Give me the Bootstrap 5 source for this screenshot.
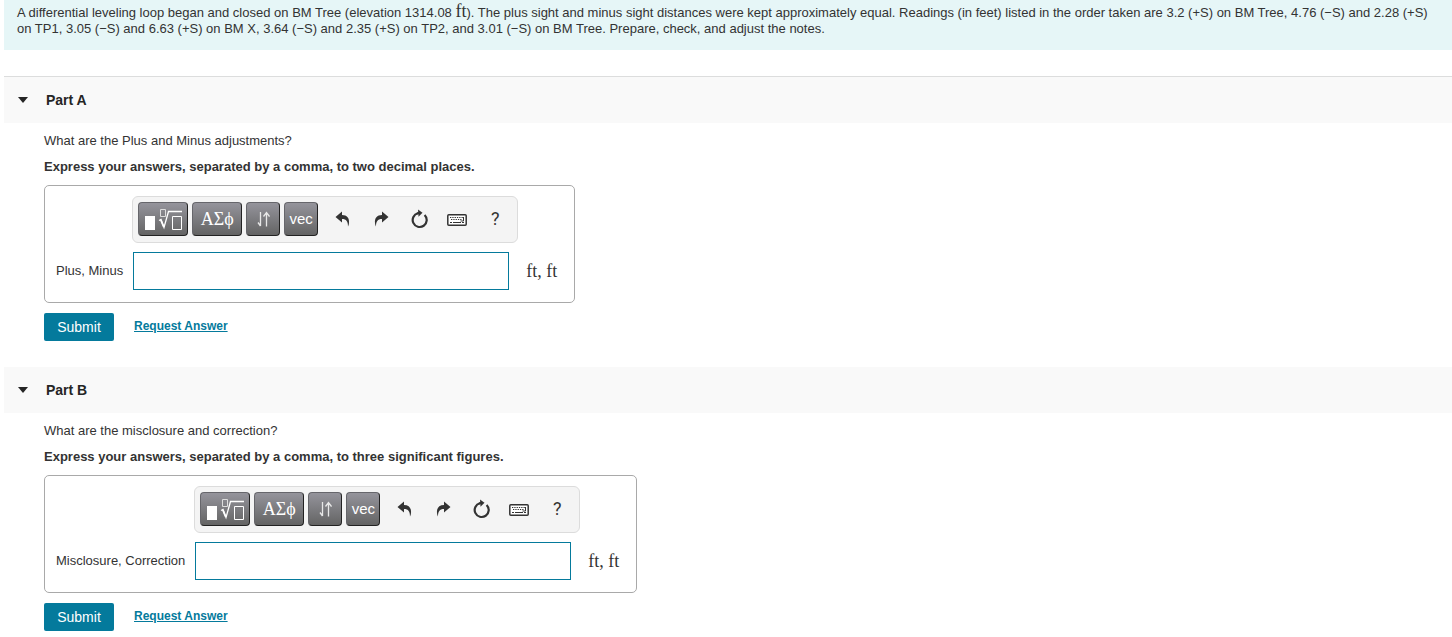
<!DOCTYPE html>
<html lang="en">
<head>
<meta charset="utf-8">
<meta name="viewport" content="width=device-width, initial-scale=1">
<title>Differential leveling</title>
<link href="https://cdn.jsdelivr.net/npm/bootstrap@5.3.0/dist/css/bootstrap.min.css" rel="stylesheet">
<style>
  body { font-family: "Liberation Sans", Arial, sans-serif; font-size: 13px; line-height: 16px; color: #333; background: #fff; }
  .page-main { padding-left: 4px; }
  .intro { background: #e6f6f7; padding: 5px 13px 13px; margin-bottom: 26px; }
  .intro p { margin: 0; }
  .unit { font-family: "Liberation Serif", "Times New Roman", serif; font-size: 18px; }
  .intro .unit { line-height: 1px; }
  .part { margin-bottom: 26px; }
  .part-head { background: #f9f9f9; height: 46px; }
  .part-first .part-head { border-top: 1px solid #dcdddd; height: 47px; }
  .part-toggle { background: none; border: 0; padding: 0 14px; height: 100%; gap: 18px; color: #252525; font-size: 14px; font-weight: 700; }
  .part-body { padding: 10px 0 0 40px; }
  .part-body p { margin-bottom: 10px; }
  .answer-box { border: 1px solid #a9a9a9; border-radius: 5px; padding: 10px 17px 12px 11px; margin-bottom: 10px; }
  .answer-label { line-height: 38px; margin-right: 9px; }
  .answer-unit { line-height: 38px; margin-left: 8px; }
  .math-bar { background: #f4f4f4; border: 1px solid #dcdcdc; border-radius: 6px; padding: 5px 3px 6px 5px; width: 386px; height: 47px; margin-bottom: 9px; }
  .math-input { display: block; width: 376px; height: 38px; margin: 0 1px; border: 1px solid #047a9c; border-radius: 0; padding: 4px 8px; font-size: 16px; }
  .key { flex: none; width: 34px; height: 34px; padding: 0 0 1px; border: 1px solid; border-color: #66666b #222 #222 #66666b; border-radius: 4px; background: linear-gradient(#96959d, #626262) border-box; color: #fff; font-size: 15px; margin-right: 4px; }
  .key-wide { width: 50px; }
  .key-greek { font-family: "Liberation Serif", serif; font-size: 18px; }
  .tool-set { margin-left: 2px; }
  .tool { width: 38px; height: 34px; padding: 0; border: 0; background: none; color: #333; font-family: Roboto, sans-serif; font-size: 18px; }
  .key svg, .tool svg { display: block; }
  .submit-btn { width: 70px; height: 28px; padding: 0; border: 0; border-radius: 2px; background: #047a9c; color: #fff; font-size: 14px; }
  .request { color: #047a9c; font-size: 12px; font-weight: 700; margin-left: 20px; padding-bottom: 2px; }
</style>
</head>
<body>
<svg class="d-none" aria-hidden="true">
  <symbol id="i-root" viewBox="0 0 40 24">
    <path d="M2 9h10v14H2z" fill="#fff"/>
    <g fill="none" stroke="#fff"><path d="M17.500 2.500h5v7h-5z" stroke="#ddd"/><path d="M29.500 9.500h9v13h-9z"/><path d="M16 13.500l2-1 3 8 4.500-16H39" stroke-width="1.300"/><path d="M17.800 13l3 7" stroke-width="1.800"/></g>
  </symbol>
  <symbol id="i-updown" viewBox="0 0 14 18">
    <path d="M4.500 2v14M2 12.500L4.500 16M10.500 16.500v-14M7.500 6.500l3-4 3 4" fill="none" stroke="#e8e8e8" stroke-width="1.300"/>
  </symbol>
  <symbol id="i-undo" viewBox="0 0 16 16">
    <path d="M0.500 6L7 0.500V4c5 0 7.500 3 7 8-.1 1.500-.5 2.500-1 3.500C13 10.500 11.500 8 7 8v3.500z" fill="currentColor"/>
  </symbol>
  <symbol id="i-reset" viewBox="0 0 18 20">
    <path d="M14.600 6a7 7 0 1 1-6.600-1.800" fill="none" stroke="currentColor" stroke-width="2.200"/><path d="M8 0.500l4.500 3.200-4 4z" fill="currentColor"/><path d="M7 4.500l3-1" stroke="currentColor" stroke-width="2"/>
  </symbol>
  <symbol id="i-keys" viewBox="0 0 20 14">
    <rect x="0.800" y="2.800" width="18.400" height="10.400" rx="1" fill="#fff" stroke="currentColor" stroke-width="1.500"/>
    <path d="M3 5.500h13M4 7.500h11" stroke="currentColor" stroke-width="1.200" stroke-dasharray="1.300 1"/><path d="M16.500 5v4h-3" fill="none" stroke="currentColor"/><path d="M3 10.500h2M6 10.500h8M15 10.500h2" stroke="currentColor" stroke-width="1.200"/>
  </symbol>
</svg>

<main class="page-main">
  <section class="intro">
    <p>A differential leveling loop began and closed on BM Tree (elevation 1314.08 <span class="unit">ft</span>). The plus sight and minus sight distances were kept approximately equal. Readings (in feet) listed in the order taken are 3.2 (+S) on BM Tree, 4.76 (−S) and 2.28 (+S) on TP1, 3.05 (−S) and 6.63 (+S) on BM X, 3.64 (−S) and 2.35 (+S) on TP2, and 3.01 (−S) on BM Tree. Prepare, check, and adjust the notes.</p>
  </section>

  <section class="part part-first">
    <h2 class="part-head m-0">
      <button class="part-toggle d-flex align-items-center" type="button" aria-expanded="true"><svg width="10" height="6" viewBox="0 0 10 6"><path d="M0 0h10L5 6z" fill="currentColor"/></svg>Part A</button>
    </h2>
    <div class="part-body">
      <p>What are the Plus and Minus adjustments?</p>
      <p class="fw-bold">Express your answers, separated by a comma, to two decimal places.</p>
      <div class="d-flex"><div class="answer-box d-flex align-items-end">
        <label class="answer-label" for="answer-a">Plus, Minus</label>
        <div>
          <div class="math-bar d-flex align-items-center" role="toolbar" aria-label="Math tools">
            <button type="button" class="key key-wide d-flex align-items-center justify-content-center" aria-label="Templates"><svg width="40" height="24"><use href="#i-root"/></svg></button>
            <button type="button" class="key key-wide key-greek">ΑΣϕ</button>
            <button type="button" class="key d-flex align-items-center justify-content-center" aria-label="Arrows"><svg width="14" height="18"><use href="#i-updown"/></svg></button>
            <button type="button" class="key">vec</button>
            <div class="tool-set d-flex">
              <button type="button" class="tool d-flex align-items-center justify-content-center" aria-label="Undo"><svg width="16" height="16"><use href="#i-undo"/></svg></button>
              <button type="button" class="tool d-flex align-items-center justify-content-center" aria-label="Redo"><svg width="16" height="16" viewBox="0 0 16 16"><g transform="matrix(-1 0 0 1 16 0)"><use href="#i-undo"/></g></svg></button>
              <button type="button" class="tool d-flex align-items-center justify-content-center" aria-label="Reset"><svg width="18" height="20"><use href="#i-reset"/></svg></button>
              <button type="button" class="tool d-flex align-items-center justify-content-center" aria-label="Keyboard shortcuts"><svg width="20" height="14"><use href="#i-keys"/></svg></button>
              <button type="button" class="tool">?</button>
            </div>
          </div>
          <input class="math-input" id="answer-a" type="text">
        </div>
        <span class="answer-unit unit">ft, ft</span>
      </div></div>
      <div class="d-flex align-items-center">
        <button type="submit" class="submit-btn">Submit</button>
        <a class="request" href="#">Request Answer</a>
      </div>
    </div>
  </section>

  <section class="part mb-0">
    <h2 class="part-head m-0">
      <button class="part-toggle d-flex align-items-center" type="button" aria-expanded="true"><svg width="10" height="6" viewBox="0 0 10 6"><path d="M0 0h10L5 6z" fill="currentColor"/></svg>Part B</button>
    </h2>
    <div class="part-body">
      <p>What are the misclosure and correction?</p>
      <p class="fw-bold">Express your answers, separated by a comma, to three significant figures.</p>
      <div class="d-flex"><div class="answer-box d-flex align-items-end">
        <label class="answer-label" for="answer-b">Misclosure, Correction</label>
        <div>
          <div class="math-bar d-flex align-items-center" role="toolbar" aria-label="Math tools">
            <button type="button" class="key key-wide d-flex align-items-center justify-content-center" aria-label="Templates"><svg width="40" height="24"><use href="#i-root"/></svg></button>
            <button type="button" class="key key-wide key-greek">ΑΣϕ</button>
            <button type="button" class="key d-flex align-items-center justify-content-center" aria-label="Arrows"><svg width="14" height="18"><use href="#i-updown"/></svg></button>
            <button type="button" class="key">vec</button>
            <div class="tool-set d-flex">
              <button type="button" class="tool d-flex align-items-center justify-content-center" aria-label="Undo"><svg width="16" height="16"><use href="#i-undo"/></svg></button>
              <button type="button" class="tool d-flex align-items-center justify-content-center" aria-label="Redo"><svg width="16" height="16" viewBox="0 0 16 16"><g transform="matrix(-1 0 0 1 16 0)"><use href="#i-undo"/></g></svg></button>
              <button type="button" class="tool d-flex align-items-center justify-content-center" aria-label="Reset"><svg width="18" height="20"><use href="#i-reset"/></svg></button>
              <button type="button" class="tool d-flex align-items-center justify-content-center" aria-label="Keyboard shortcuts"><svg width="20" height="14"><use href="#i-keys"/></svg></button>
              <button type="button" class="tool">?</button>
            </div>
          </div>
          <input class="math-input" id="answer-b" type="text">
        </div>
        <span class="answer-unit unit">ft, ft</span>
      </div></div>
      <div class="d-flex align-items-center">
        <button type="submit" class="submit-btn">Submit</button>
        <a class="request" href="#">Request Answer</a>
      </div>
    </div>
  </section>
</main>
<script src="https://cdn.jsdelivr.net/npm/bootstrap@5.3.0/dist/js/bootstrap.bundle.min.js"></script>
</body>
</html>
